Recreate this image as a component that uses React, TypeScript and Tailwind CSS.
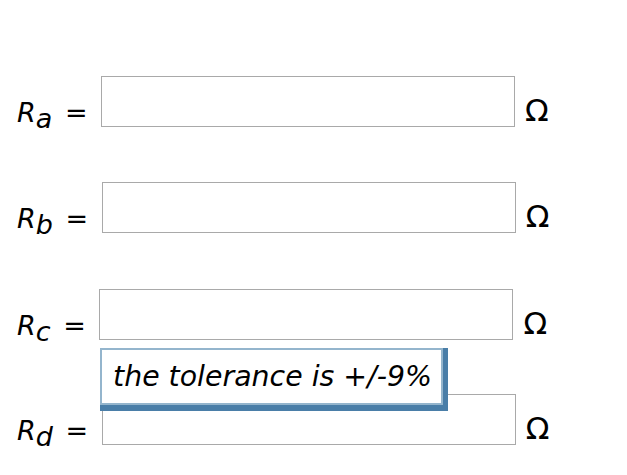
import React from "react";

const rows = [
  { sub: "a", mt: "mt-[76px]" },
  { sub: "b", mt: "mt-[55px]" },
  { sub: "c", mt: "mt-[56px]" },
  { sub: "d", mt: "mt-[54px]" },
];

export default function App() {
  return (
    <div
      className="relative w-[627px] h-[475px] bg-white text-black overflow-hidden"
      style={{ fontFamily: '"DejaVu Sans", Verdana, sans-serif' }}
    >
      <div className="flex flex-col pl-[17px]">
        {rows.map((r) => (
          <div key={r.sub} className={`flex items-end ${r.mt}`}>
            <span className="text-[27px] leading-none mb-[1px] whitespace-pre">
              <span className="italic">R</span>
              <span className="italic relative top-[6px] mr-[4px]">{r.sub}</span>
              <span>{" = "}</span>
            </span>
            <div className="ml-[5px] w-[414px] h-[51px] border border-[#a9a9a9] bg-white" />
            <span className="ml-[10px] text-[31px] leading-none mb-[1px]">Ω</span>
          </div>
        ))}
      </div>

      <div className="absolute left-[100px] top-[348px] border-r-[5px] border-b-[6px] border-[#4a7ea8]">
        <div className="w-[343px] h-[57px] border-2 border-[#94b5cd] bg-white pl-[11px] pt-[13px]">
          <span className="italic text-[28.4px] leading-none whitespace-pre">
            the tolerance is +/-9%
          </span>
        </div>
      </div>
    </div>
  );
}
